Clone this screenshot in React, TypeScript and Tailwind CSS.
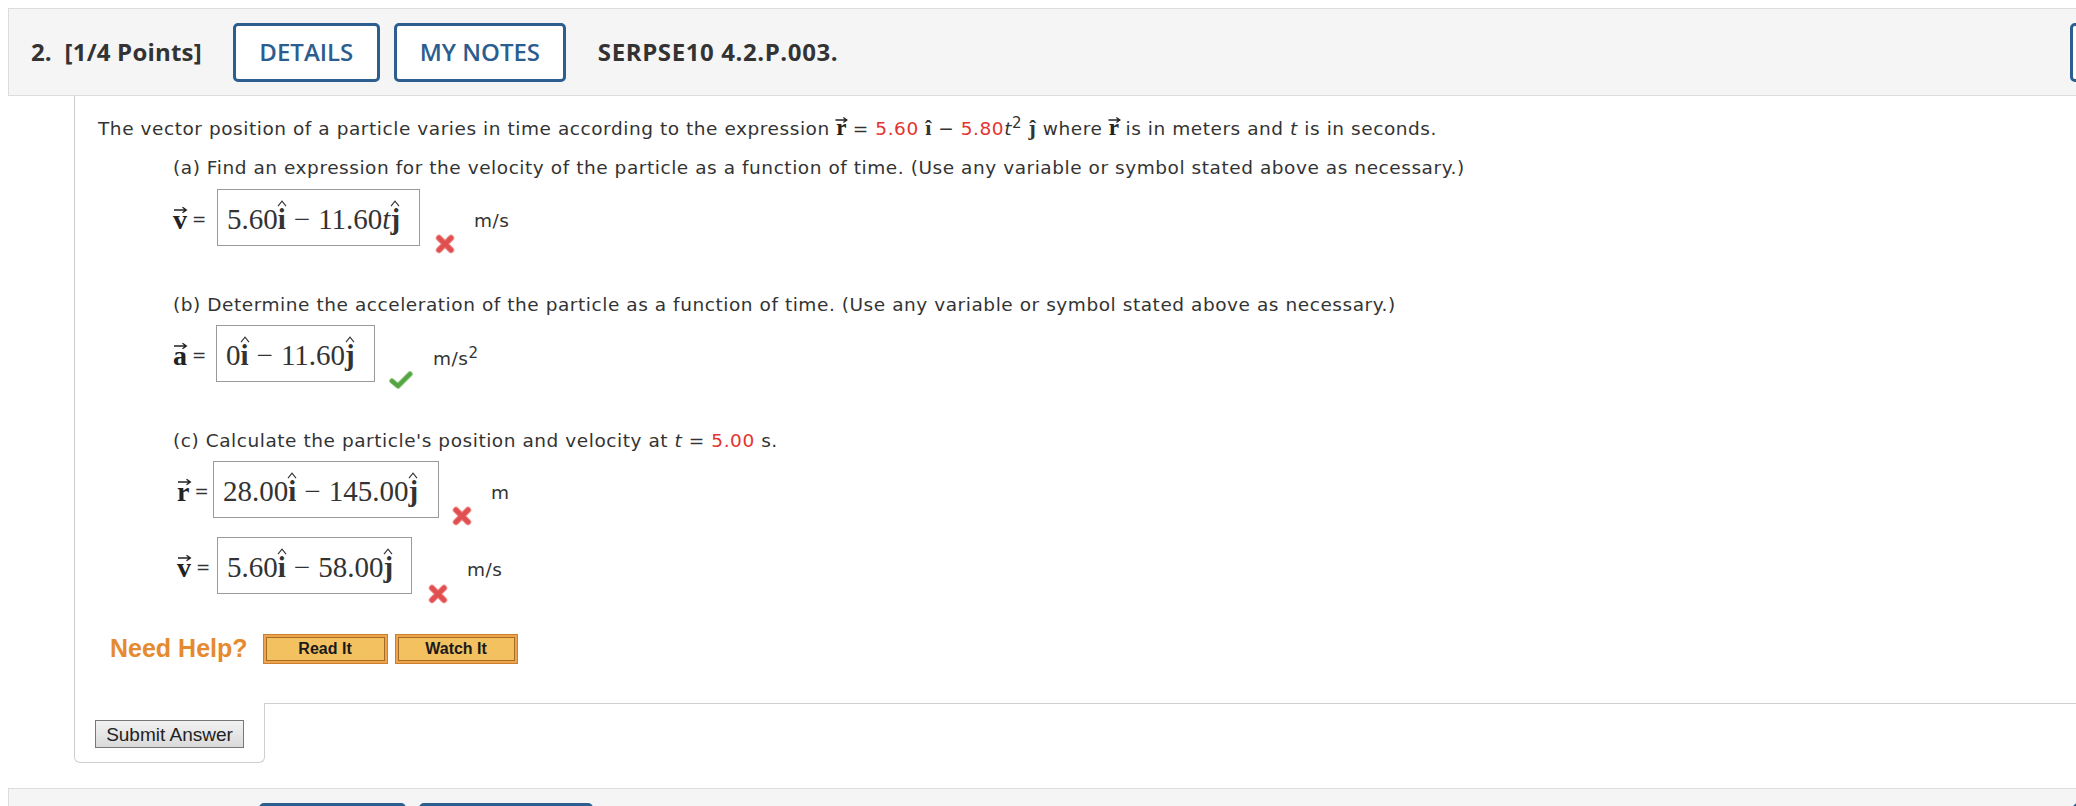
import React from 'react';

const body = "font-['DejaVu_Sans',Verdana,sans-serif]";
const serif = "font-['Liberation_Serif','Times_New_Roman',serif]";
const line = 'text-[18.5px] tracking-[0.55px] leading-[39px] whitespace-nowrap';

function Hat({ ch }: { ch: string }) {
  return (
    <span className="relative inline-block font-bold">
      {ch}
      <svg className="absolute left-1/2 -translate-x-1/2 top-[-5px] w-[10px] h-[7px]" viewBox="0 0 10 7">
        <path d="M1 6.2 L5 1.2 L9 6.2" fill="none" stroke="#333" strokeWidth="1.1" />
      </svg>
    </span>
  );
}

function Vec({ ch, size = 'lg' }: { ch: string; size?: 'lg' | 'sm' }) {
  if (size === 'sm') {
    return (
      <span className="relative inline-block font-['Liberation_Serif',serif] font-bold text-[23px] leading-none text-[#222] tracking-normal">
        {ch}
        <svg className="absolute left-[-1px] top-[0px] w-[13px] h-[8px]" viewBox="0 0 14 8">
          <path d="M0.5 4 H12 M9 1.2 L12.8 4 L9 6.8" fill="none" stroke="#222" strokeWidth="1.4" />
        </svg>
      </span>
    );
  }
  return (
    <span className="relative inline-block font-['Liberation_Serif',serif] font-bold text-[28px] leading-none text-[#222]">
      {ch}
      <svg className="absolute left-[0px] top-[0px] w-[15px] h-[8px]" viewBox="0 0 14 8">
        <path d="M0.5 4 H12 M9 1.2 L12.8 4 L9 6.8" fill="none" stroke="#222" strokeWidth="1.4" />
      </svg>
    </span>
  );
}

function Minus() {
  return <span className="mx-[8px]">−</span>;
}

function WrongIcon() {
  return (
    <svg viewBox="0 0 20 20" className="w-[20px] h-[20px]">
      <path d="M4 4 L16 16 M16 4 L4 16" stroke="#f08a8a" strokeWidth="6.5" strokeLinecap="round" />
      <path d="M4 4 L16 16 M16 4 L4 16" stroke="#e04f4f" strokeWidth="4.5" strokeLinecap="round" />
    </svg>
  );
}

function RightIcon() {
  return (
    <svg viewBox="0 0 24 18" className="w-[24px] h-[18px]">
      <path d="M3 10 L9 15 L21 3" fill="none" stroke="#8cc67a" strokeWidth="5.5" strokeLinecap="round" strokeLinejoin="round" />
      <path d="M3 10 L9 15 L21 3" fill="none" stroke="#55a545" strokeWidth="3.8" strokeLinecap="round" strokeLinejoin="round" />
    </svg>
  );
}

interface RowProps {
  label: string;
  labelW: string;
  boxW: string;
  ok: boolean;
  iconGap: string;
  iconTop: string;
  unitGap: string;
  unitTop: string;
  unit: React.ReactNode;
  children: React.ReactNode;
}

function AnswerRow({ label, labelW, boxW, ok, iconGap, iconTop, unitGap, unitTop, unit, children }: RowProps) {
  return (
    <div className="flex items-start h-[57px]">
      <div className={`${labelW} h-[57px] flex items-center pt-[4px]`}>
        <Vec ch={label} />
        <span className={`${body} text-[17px] text-[#333] ml-[5px]`}>=</span>
      </div>
      <div className={`${boxW} h-[57px] border border-[#9a9a9a] flex items-center pl-[9px] pt-[4px] ${serif} text-[29px] text-[#333] leading-none whitespace-nowrap`}>
        {children}
      </div>
      <div className={`${iconGap} ${iconTop}`}>{ok ? <RightIcon /> : <WrongIcon />}</div>
      <div className={`${unitGap} ${unitTop} ${body} text-[18.5px] tracking-[0.55px] leading-[20px] text-[#333]`}>{unit}</div>
    </div>
  );
}

function HelpButton({ text, w }: { text: string; w: string }) {
  return (
    <div className={`${w} h-[30px] border border-[#c9812f] bg-[#f0a44a] p-[2px]`}>
      <div className="h-full border border-[#a46b29] bg-[#f3c160] flex items-center justify-center font-['Liberation_Sans',Arial,sans-serif] font-bold text-[16px] text-[#1a1a1a]">
        {text}
      </div>
    </div>
  );
}

function QuestionHeader({ num, points, code }: { num: string; points: string; code: string }) {
  return (
    <div className="ml-[8px] h-[88px] bg-[#f5f5f5] border-y border-l border-[#dcdcdc] flex items-center font-['Open_Sans',sans-serif] text-[24px] text-[#333]">
      <span className="ml-[22px] font-bold">{num}</span>
      <span className="ml-[13px] font-bold tracking-[0.2px]">{points}</span>
      <button className="ml-[31px] w-[147px] h-[59px] border-[3px] border-[#2c5f8f] rounded-[5px] bg-white text-[#2b5d8e] font-semibold">
        DETAILS
      </button>
      <button className="ml-[14px] w-[172px] h-[59px] border-[3px] border-[#2c5f8f] rounded-[5px] bg-white text-[#2b5d8e] font-semibold">
        MY NOTES
      </button>
      <span className="ml-[32px] font-bold tracking-[0.6px]">{code}</span>
      <div className="flex-1" />
      <button className="shrink-0 w-[150px] h-[59px] mr-[-144px] border-[3px] border-[#2c5f8f] rounded-[5px] bg-white" />
    </div>
  );
}

export default function App() {
  return (
    <div className={`w-[2076px] h-[806px] overflow-hidden bg-white pt-[8px] ${body} text-[#333]`}>
      <QuestionHeader num="2." points="[1/4 Points]" code="SERPSE10 4.2.P.003." />

      <div className="ml-[74px]">
        <div className="border-l border-[#cfcfcf] pt-[12px] pb-[39px]">
          <p className={`ml-[23px] ${line}`}>
            The vector position of a particle varies in time according to the expression{' '}
            <Vec ch="r" size="sm" /> = <span className="text-[#e3342f]">5.60</span>{' '}
            <span className={`${serif} font-bold text-[22px]`}>î</span> − <span className="text-[#e3342f]">5.80</span>
            <i>t</i>
            <sup className="text-[15px]">2</sup> <span className={`${serif} font-bold text-[22px]`}>ĵ</span> where{' '}
            <Vec ch="r" size="sm" /> is in meters and <i>t</i> is in seconds.
          </p>

          <div className="ml-[98px]">
            <p className={line}>
              (a) Find an expression for the velocity of the particle as a function of time. (Use any variable or symbol stated above as necessary.)
            </p>
            <div className="mt-[2px]">
              <AnswerRow
                label="v"
                labelW="w-[44px]"
                boxW="w-[203px]"
                ok={false}
                iconGap="ml-[15px]"
                iconTop="mt-[45px]"
                unitGap="ml-[19px]"
                unitTop="mt-[22px]"
                unit="m/s"
              >
                5.60<Hat ch="i" />
                <Minus />
                11.60<i>t</i>
                <Hat ch="j" />
              </AnswerRow>
            </div>

            <p className={`mt-[39px] ${line}`}>
              (b) Determine the acceleration of the particle as a function of time. (Use any variable or symbol stated above as necessary.)
            </p>
            <div className="mt-[1px]">
              <AnswerRow
                label="a"
                labelW="w-[43px]"
                boxW="w-[159px]"
                ok={true}
                iconGap="ml-[14px]"
                iconTop="mt-[46px]"
                unitGap="ml-[20px]"
                unitTop="mt-[24px]"
                unit={
                  <span>
                    m/s<sup className="text-[15px]">2</sup>
                  </span>
                }
              >
                0<Hat ch="i" />
                <Minus />
                11.60<Hat ch="j" />
              </AnswerRow>
            </div>

            <p className={`mt-[39px] ${line}`}>
              (c) Calculate the particle's position and velocity at <i>t</i> = <span className="text-[#e3342f]">5.00</span> s.
            </p>
            <div className="mt-[1px] ml-[4px]">
              <AnswerRow
                label="r"
                labelW="w-[36px]"
                boxW="w-[226px]"
                ok={false}
                iconGap="ml-[13px]"
                iconTop="mt-[45px]"
                unitGap="ml-[19px]"
                unitTop="mt-[22px]"
                unit="m"
              >
                28.00<Hat ch="i" />
                <Minus />
                145.00<Hat ch="j" />
              </AnswerRow>
            </div>
            <div className="mt-[19px] ml-[4px]">
              <AnswerRow
                label="v"
                labelW="w-[40px]"
                boxW="w-[195px]"
                ok={false}
                iconGap="ml-[16px]"
                iconTop="mt-[47px]"
                unitGap="ml-[19px]"
                unitTop="mt-[23px]"
                unit="m/s"
              >
                5.60<Hat ch="i" />
                <Minus />
                58.00<Hat ch="j" />
              </AnswerRow>
            </div>
          </div>

          <div className="mt-[40px] ml-[35px] flex items-center h-[30px]">
            <span className="font-['Liberation_Sans',Arial,sans-serif] font-bold text-[25px] text-[#e58a2f]">Need Help?</span>
            <div className="ml-[15px]">
              <HelpButton text="Read It" w="w-[125px]" />
            </div>
            <div className="ml-[7px]">
              <HelpButton text="Watch It" w="w-[123px]" />
            </div>
          </div>
        </div>

        <div className="flex h-[60px]">
          <div className="w-[191px] border-l border-b border-r border-[#cfcfcf] rounded-b-[6px] pl-[20px] pt-[17px]">
            <button className="w-[149px] h-[28px] border border-[#777] bg-gradient-to-b from-[#f2f2f2] to-[#dadada] font-['Liberation_Sans',Arial,sans-serif] text-[19px] leading-none text-[#222]">
              Submit Answer
            </button>
          </div>
          <div className="flex-1 border-t border-[#cfcfcf]" />
        </div>
      </div>

      <div className="mt-[25px]">
        <div className="ml-[8px] h-[88px] bg-[#f5f5f5] border-y border-l border-[#dcdcdc] flex items-center font-['Open_Sans',sans-serif] text-[24px] text-[#333]">
          <span className="ml-[22px] font-bold w-[205px]">3. [0/1 Points]</span>
          <button className="ml-[23px] w-[147px] h-[59px] border-[3px] border-[#2c5f8f] rounded-[5px] bg-white text-[#2b5d8e] font-semibold">
            DETAILS
          </button>
          <button className="ml-[13px] w-[174px] h-[59px] border-[3px] border-[#2c5f8f] rounded-[5px] bg-white text-[#2b5d8e] font-semibold">
            MY NOTES
          </button>
          <div className="flex-1" />
          <button className="shrink-0 w-[150px] h-[59px] mr-[-147px] border-[3px] border-[#2c5f8f] rounded-[5px] bg-white" />
        </div>
      </div>
    </div>
  );
}
